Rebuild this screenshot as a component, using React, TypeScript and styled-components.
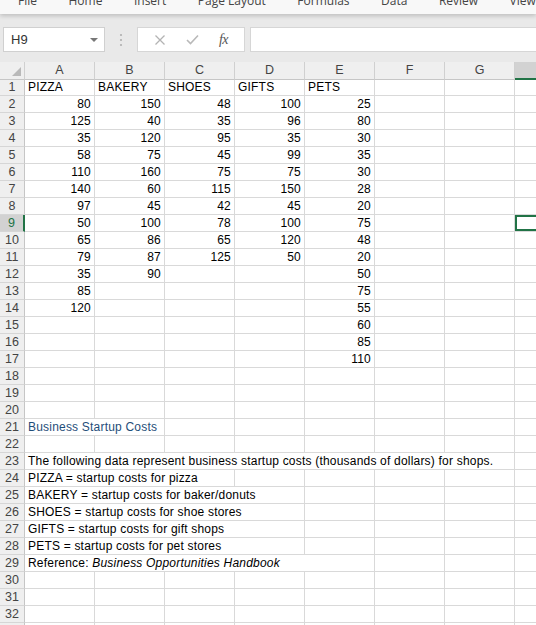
import styled, { createGlobalStyle } from "styled-components"

const GlobalStyle = createGlobalStyle`
  html, body {
    margin: 0;
    padding: 0;
    overflow: hidden;
    background: #ffffff;
  }
`

const CELL_FONT = `"Liberation Sans", Arial, sans-serif`
const GRID = "#d9d9d9"
const GREEN = "#217346"

const Window = styled.div`
  width: 100vw;
  height: 100vh;
  display: flex;
  flex-direction: column;
  background: #e9e9e9;
  overflow: hidden;
`

const TabBar = styled.div`
  flex: none;
  height: 14px;
  padding-left: 18px;
  gap: 31.5px;
  background: #f8f8f8;
  box-shadow: 0 2px 4px rgba(0, 0, 0, 0.18);
  display: flex;
  overflow: hidden;
  position: relative;
  z-index: 1;
`

const Tab = styled.div`
  margin-top: -9px;
  font-family: "Open Sans", "Noto Sans", sans-serif;
  font-size: 12px;
  line-height: 20px;
  color: #444;
  white-space: nowrap;
`

const FormulaBar = styled.div`
  flex: none;
  display: flex;
  align-items: center;
  height: 25px;
  padding: 13px 0 10px 3px;
`

const NameBox = styled.div`
  width: 102px;
  height: 25px;
  box-sizing: border-box;
  background: #fff;
  border: 1px solid #d0d0d0;
  display: flex;
  align-items: center;
  justify-content: space-between;
  padding: 0 6px 0 7px;
  font-family: ${CELL_FONT};
  font-size: 13px;
  color: #333;
`

const Caret = styled.span`
  width: 0;
  height: 0;
  border-left: 4px solid transparent;
  border-right: 4px solid transparent;
  border-top: 4px solid #777;
`

const Grip = styled.div`
  width: 32px;
  display: flex;
  justify-content: center;
`

const FxBox = styled.div`
  width: 108px;
  height: 25px;
  box-sizing: border-box;
  background: #fff;
  border: 1px solid #d6d6d6;
  display: flex;
  align-items: center;
  justify-content: space-around;
  padding: 0 6px;
`

const FxLabel = styled.span`
  font-family: "Liberation Serif", "Times New Roman", serif;
  font-style: italic;
  font-size: 14px;
  color: #555;
  letter-spacing: -0.5px;
`

const FormulaInput = styled.div`
  flex: 1;
  height: 25px;
  margin-left: 5px;
  box-sizing: border-box;
  background: #fff;
  border: 1px solid #d6d6d6;
  border-right: none;
`

const Sheet = styled.div`
  flex: 1;
  background: #fff;
  display: flex;
  flex-direction: column;
  overflow: hidden;
`

const Line = styled.div<{ $height: number }>`
  display: grid;
  grid-template-columns: 25px repeat(8, 70px);
  height: ${p => p.$height}px;
  flex: none;
`

const ColHeader = styled.div<{ $active?: boolean }>`
  box-sizing: border-box;
  background: ${p => (p.$active ? "#d2d2d2" : "#efefef")};
  border-right: 1px solid #d0d0d0;
  border-bottom: ${p => (p.$active ? `2px solid ${GREEN}` : "1px solid #c6c6c6")};
  font-family: ${CELL_FONT};
  font-size: 12.5px;
  line-height: 16px;
  color: #444;
  text-align: center;
  position: relative;
`

const Corner = styled(ColHeader)`
  &::after {
    content: "";
    position: absolute;
    right: 3px;
    bottom: 3px;
    width: 0;
    height: 0;
    border-left: 9px solid transparent;
    border-bottom: 9px solid #b9b9b9;
  }
`

const RowHeader = styled.div<{ $active?: boolean }>`
  box-sizing: border-box;
  background: ${p => (p.$active ? "#d2d2d2" : "#efefef")};
  border-right: ${p => (p.$active ? `2px solid ${GREEN}` : "1px solid #c6c6c6")};
  border-bottom: 1px solid #d6d6d6;
  font-family: ${CELL_FONT};
  font-size: 12.5px;
  line-height: 16px;
  color: ${p => (p.$active ? GREEN : "#444")};
  text-align: center;
`

const Cell = styled.div<{ $span?: number; $num?: boolean; $title?: boolean; $selected?: boolean }>`
  grid-column: span ${p => p.$span ?? 1};
  box-sizing: border-box;
  border-right: 1px solid ${GRID};
  border-bottom: 1px solid ${GRID};
  padding: 0 3px;
  font-family: ${CELL_FONT};
  font-size: 12px;
  letter-spacing: 0.2px;
  line-height: 16px;
  color: ${p => (p.$title ? "#1f4e79" : "#000")};
  text-align: ${p => (p.$num ? "right" : "left")};
  white-space: nowrap;
  overflow: visible;
  box-shadow: ${p => (p.$selected ? `inset 0 0 0 2px ${GREEN}` : "none")};
`

const Em = styled.i`
  font-style: italic;
`

const tabs = ["File", "Home", "Insert", "Page Layout", "Formulas", "Data", "Review", "View"]

const columns = ["A", "B", "C", "D", "E", "F", "G", "H"]

const data: Record<string, number[]> = {
  A: [80, 125, 35, 58, 110, 140, 97, 50, 65, 79, 35, 85, 120],
  B: [150, 40, 120, 75, 160, 60, 45, 100, 86, 87, 90],
  C: [48, 35, 95, 45, 75, 115, 42, 78, 65, 125],
  D: [100, 96, 35, 99, 75, 150, 45, 100, 120, 50],
  E: [25, 80, 30, 35, 30, 28, 20, 75, 48, 20, 50, 75, 55, 60, 85, 110],
}

const headings = ["PIZZA", "BAKERY", "SHOES", "GIFTS", "PETS"]

type Note = { span: number; text: React.ReactNode; title?: boolean }

const notes: Record<number, Note> = {
  21: { span: 2, text: "Business Startup Costs", title: true },
  23: { span: 7, text: "The following data represent business startup costs (thousands of dollars) for shops." },
  24: { span: 3, text: "PIZZA = startup costs for pizza" },
  25: { span: 4, text: "BAKERY = startup costs for baker/donuts" },
  26: { span: 4, text: "SHOES = startup costs for shoe stores" },
  27: { span: 4, text: "GIFTS = startup costs for gift shops" },
  28: { span: 4, text: "PETS = startup costs for pet stores" },
  29: {
    span: 5,
    text: (
      <>
        Reference: <Em>Business Opportunities Handbook</Em>
      </>
    ),
  },
}

const SELECTED = { col: "H", row: 9 }

const SheetRow = ({ row }: { row: number }) => {
  const note = notes[row]
  const rest = note ? columns.slice(note.span) : columns
  return (
    <Line $height={17}>
      <RowHeader $active={row === SELECTED.row}>{row}</RowHeader>
      {note && (
        <Cell $span={note.span} $title={note.title}>
          {note.text}
        </Cell>
      )}
      {rest.map(col => {
        let value: React.ReactNode = null
        let num = false
        const idx = columns.indexOf(col)
        if (row === 1 && idx < headings.length) value = headings[idx]
        else if (data[col] && data[col][row - 2] !== undefined) {
          value = data[col][row - 2]
          num = true
        }
        return (
          <Cell key={col} $num={num} $selected={col === SELECTED.col && row === SELECTED.row}>
            {value}
          </Cell>
        )
      })}
    </Line>
  )
}

const App = () => {
  const rows = Array.from({ length: 33 }, (_, i) => i + 1)
  return (
    <Window>
      <GlobalStyle />
      <TabBar>
        {tabs.map(name => (
          <Tab key={name}>{name}</Tab>
        ))}
      </TabBar>
      <FormulaBar>
        <NameBox>
          H9
          <Caret />
        </NameBox>
        <Grip>
          <svg width="4" height="14" viewBox="0 0 4 14">
            <circle cx="2" cy="2" r="1.1" fill="#b0b0b0" />
            <circle cx="2" cy="7" r="1.1" fill="#b0b0b0" />
            <circle cx="2" cy="12" r="1.1" fill="#b0b0b0" />
          </svg>
        </Grip>
        <FxBox>
          <svg width="12" height="12" viewBox="0 0 12 12">
            <path d="M1.5 1.5 L10.5 10.5 M10.5 1.5 L1.5 10.5" stroke="#b3b3b3" strokeWidth="1.3" fill="none" />
          </svg>
          <svg width="13" height="11" viewBox="0 0 13 11">
            <path d="M1 6 L4.5 9.5 L12 1.5" stroke="#b9b9b9" strokeWidth="1.6" fill="none" />
          </svg>
          <FxLabel>fx</FxLabel>
        </FxBox>
        <FormulaInput />
      </FormulaBar>
      <Sheet>
        <Line $height={17}>
          <Corner />
          {columns.map(col => (
            <ColHeader key={col} $active={col === SELECTED.col}>
              {col}
            </ColHeader>
          ))}
        </Line>
        {rows.map(r => (
          <SheetRow key={r} row={r} />
        ))}
      </Sheet>
    </Window>
  )
}

export default App
